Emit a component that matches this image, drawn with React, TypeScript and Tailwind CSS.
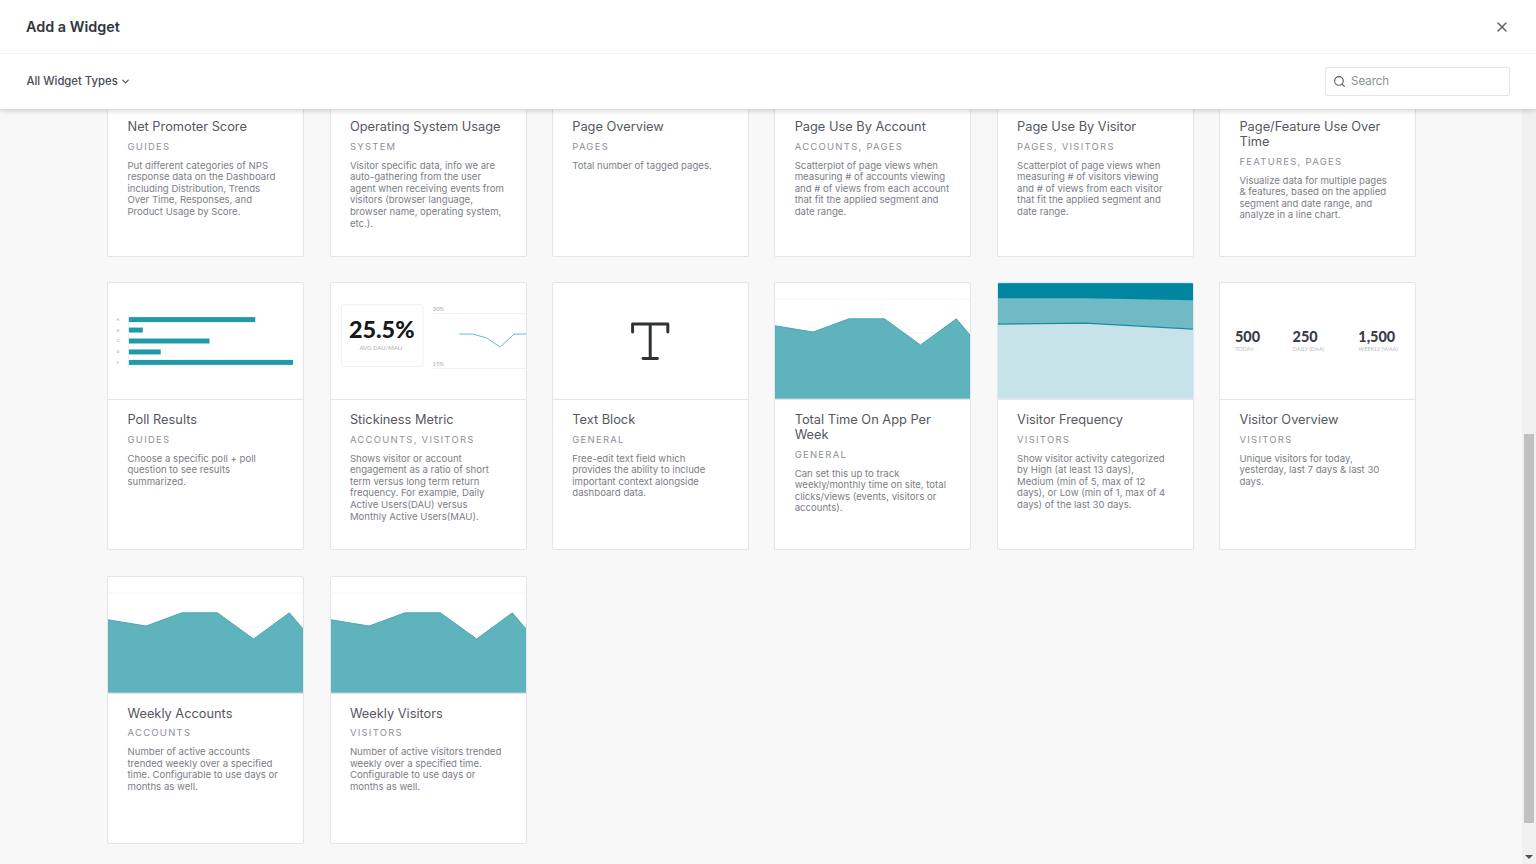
import type { ReactNode } from "react";
import { X, Search, ChevronDown } from "lucide-react";

type Widget = {
	title: string;
	tags: string;
	text: string;
	art?: ReactNode;
};

function AreaArt() {
	return (
		<svg viewBox="0 0 196 116" className="block h-[116px] w-full">
			<line x1="0" y1="16" x2="196" y2="16" stroke="#f4f4f7" />
			<line x1="0" y1="50" x2="196" y2="50" stroke="#f4f4f7" />
			<polygon
				points="0,42.7 38.3,49 74.3,35.7 110,35.7 146.3,62 182.3,35.7 196,52 196,116 0,116"
				fill="#5fb3bc"
			/>
			<polyline
				points="0,42.7 38.3,49 74.3,35.7 110,35.7 146.3,62 182.3,35.7 196,52"
				fill="none"
				stroke="#4ba6b0"
			/>
		</svg>
	);
}

function PollArt() {
	const bars = [
		["A", 34, 127],
		["B", 44.5, 14],
		["C", 55.5, 81],
		["D", 66.5, 32],
		["E", 77, 165],
	] as const;
	return (
		<svg viewBox="0 0 196 116" className="block h-[116px] w-full">
			<line x1="20.5" y1="31" x2="20.5" y2="85" stroke="#eef0f3" />
			{bars.map(([label, y, w]) => (
				<g key={label}>
					<text x="10" y={y + 4} fontSize="4" fill="#9a9ea6" textAnchor="middle">
						{label}
					</text>
					<rect x="21" y={y} width={w} height="5" fill="#1f9aa8" />
				</g>
			))}
		</svg>
	);
}

function StickinessArt() {
	return (
		<svg viewBox="0 0 196 116" className="block h-[116px] w-full">
			<rect x="10.5" y="21.5" width="82" height="62" rx="1" fill="#fff" stroke="#f0f0f3" />
			<text
				x="51"
				y="55"
				fontSize="23.5"
				fontWeight="900"
				fill="#17181c"
				textAnchor="middle"
				fontFamily="Lato, sans-serif"
			>
				25.5%
			</text>
			<text x="50" y="67" fontSize="6" fill="#a9adb4" textAnchor="middle" fontFamily="Lato, sans-serif">
				AVG DAU/MAU
			</text>
			<text x="102" y="28" fontSize="6" fill="#a9adb4" fontFamily="Lato, sans-serif">
				30%
			</text>
			<text x="102" y="83" fontSize="6" fill="#a9adb4" fontFamily="Lato, sans-serif">
				15%
			</text>
			<line x1="102" y1="30.5" x2="196" y2="30.5" stroke="#f0f0f3" />
			<line x1="102" y1="85.5" x2="196" y2="85.5" stroke="#f0f0f3" />
			<polyline
				points="129,51 142.5,51 156.5,55 170,64 184,51 196,51"
				fill="none"
				stroke="#62bcc8"
				strokeWidth="1"
			/>
		</svg>
	);
}

function TextArt() {
	return (
		<svg viewBox="0 0 196 116" className="block h-[116px] w-full">
			<path
				d="M80 49 V40.8 H115.4 V49 M97.7 40.8 V75.5 M90.5 75.5 H105"
				fill="none"
				stroke="#2f3138"
				strokeWidth="3"
				strokeLinecap="round"
				strokeLinejoin="round"
			/>
		</svg>
	);
}

function FrequencyArt() {
	return (
		<svg viewBox="0 0 196 116" className="block h-[116px] w-full">
			<rect width="196" height="116" fill="#c5e3e8" />
			<polygon points="0,41 88,40 196,46 196,0 0,0" fill="#6fbac5" />
			<polygon points="0,15 88,15 196,17 196,0 0,0" fill="#00879f" />
			<polyline points="0,41 88,40 196,46" fill="none" stroke="#1a8c9f" strokeWidth="1.2" />
		</svg>
	);
}

function OverviewArt() {
	const stats = [
		["500", 15, "TODAY"],
		["250", 73, "DAILY (DAA)"],
		["1,500", 139, "WEEKLY (WAA)"],
	] as const;
	return (
		<svg viewBox="0 0 196 116" className="block h-[116px] w-full">
			{stats.map(([num, x, label]) => (
				<g key={num} fontFamily="Lato, sans-serif">
					<text x={x} y="59" fontSize="14.5" fontWeight="900" fill="#3a3d46">
						{num}
					</text>
					<text x={x} y="68" fontSize="5.7" fill="#b9bcc3">
						{label}
					</text>
				</g>
			))}
		</svg>
	);
}

const firstRow: Widget[] = [
	{
		title: "Net Promoter Score",
		tags: "GUIDES",
		text: "Put different categories of NPS response data on the Dashboard including Distribution, Trends Over Time, Responses, and Product Usage by Score.",
	},
	{
		title: "Operating System Usage",
		tags: "SYSTEM",
		text: "Visitor specific data, info we are auto-gathering from the user agent when receiving events from visitors (browser language, browser name, operating system, etc.).",
	},
	{ title: "Page Overview", tags: "PAGES", text: "Total number of tagged pages." },
	{
		title: "Page Use By Account",
		tags: "ACCOUNTS, PAGES",
		text: "Scatterplot of page views when measuring # of accounts viewing and # of views from each account that fit the applied segment and date range.",
	},
	{
		title: "Page Use By Visitor",
		tags: "PAGES, VISITORS",
		text: "Scatterplot of page views when measuring # of visitors viewing and # of views from each visitor that fit the applied segment and date range.",
	},
	{
		title: "Page/Feature Use Over Time",
		tags: "FEATURES, PAGES",
		text: "Visualize data for multiple pages &\u00a0features, based on the applied segment and date range, and analyze in a line chart.",
	},
];

const widgets: Widget[] = [
	{
		title: "Poll Results",
		tags: "GUIDES",
		text: "Choose a specific poll + poll question to see results summarized.",
		art: <PollArt />,
	},
	{
		title: "Stickiness Metric",
		tags: "ACCOUNTS, VISITORS",
		text: "Shows visitor or account engagement as a ratio of short term versus long term return frequency. For example, Daily Active Users(DAU) versus Monthly Active Users(MAU).",
		art: <StickinessArt />,
	},
	{
		title: "Text Block",
		tags: "GENERAL",
		text: "Free-edit text field which provides\u00a0the ability to include important context alongside dashboard data.",
		art: <TextArt />,
	},
	{
		title: "Total Time On App Per Week",
		tags: "GENERAL",
		text: "Can set this up to track weekly/monthly time on site, total clicks/views (events, visitors or accounts).",
		art: <AreaArt />,
	},
	{
		title: "Visitor Frequency",
		tags: "VISITORS",
		text: "Show visitor activity categorized by High (at least 13 days), Medium\u00a0(min of 5, max of 12 days), or Low (min of 1, max of 4 days) of the last 30 days.",
		art: <FrequencyArt />,
	},
	{
		title: "Visitor Overview",
		tags: "VISITORS",
		text: "Unique visitors for today, yesterday, last 7 days & last 30 days.",
		art: <OverviewArt />,
	},
	{
		title: "Weekly Accounts",
		tags: "ACCOUNTS",
		text: "Number of active accounts trended weekly over a specified time. Configurable to use days or months as well.",
		art: <AreaArt />,
	},
	{
		title: "Weekly Visitors",
		tags: "VISITORS",
		text: "Number of active visitors trended weekly over a specified time. Configurable to use days or months as well.",
		art: <AreaArt />,
	},
];

function CardBody({ widget }: { widget: Widget }) {
	return (
		<div className="px-[19.2px]">
			<h3 className="text-[12.8px] leading-[15px] text-[#55575f]">{widget.title}</h3>
			<div className="mt-[6.8px] text-[9.5px] leading-[12px] tracking-[1.25px] text-[#8d9098]">
				{widget.tags}
			</div>
			<p className="mt-[6.8px] text-[9.6px] leading-[11.6px] text-[#7b7e86]">{widget.text}</p>
		</div>
	);
}

function Card({ widget }: { widget: Widget }) {
	return (
		<div className="h-[268px] overflow-hidden rounded-[2px] border border-[#e4e4ee] bg-white">
			<div className="h-[117px] border-b border-[#e4e4ee]">{widget.art}</div>
			<div className="pt-[12px]">
				<CardBody widget={widget} />
			</div>
		</div>
	);
}

export default function App() {
	return (
		<div className="flex h-screen flex-col overflow-hidden bg-[#f8f8f9] font-['Inter',sans-serif]">
			<header className="relative z-10 bg-white shadow-[0_1px_6px_rgba(0,0,0,0.22)]">
				<div className="flex h-[54px] items-center justify-between border-b border-[#f3f3f6] pl-[26px] pr-[26px]">
					<h1 className="pt-[1px] text-[14.4px] font-semibold text-[#33353d]">Add a Widget</h1>
					<X size={16} strokeWidth={2} className="text-[#5d5f68]" />
				</div>
				<div className="flex h-[55px] items-center justify-between pl-[26.5px] pr-[26px]">
					<button className="flex items-center gap-[2px] text-[11.3px] font-medium text-[#4a4c55]">
						All Widget Types
						<ChevronDown size={11} strokeWidth={2.5} />
					</button>
					<div className="flex h-[29px] w-[185px] items-center gap-[5px] rounded-[2px] border border-[#e4e4ee] pl-[7px]">
						<Search size={13} strokeWidth={2} className="text-[#55575f]" />
						<span className="text-[11.5px] text-[#8d9098]">Search</span>
					</div>
				</div>
			</header>
			<div className="flex min-h-0 flex-1">
				<main className="min-w-0 flex-1 overflow-hidden pl-[107.3px]">
					<div className="grid grid-cols-[repeat(6,197px)] gap-x-[25.4px] gap-y-[25.5px]">
						{firstRow.map((w) => (
							<div
								key={w.title}
								className="h-[147.6px] rounded-b-[2px] border-x border-b border-[#e4e4ee] bg-white pt-[10px]"
							>
								<CardBody widget={w} />
							</div>
						))}
						{widgets.map((w) => (
							<Card key={w.title} widget={w} />
						))}
					</div>
				</main>
				<div className="relative w-[14px] bg-[#f1f1f1]">
					<div className="absolute left-[2px] top-[325px] h-[389px] w-[10px] bg-[#c1c1c1]" />
					<div className="absolute bottom-[5px] left-[3px] h-0 w-0 border-x-[4px] border-t-[4px] border-x-transparent border-t-[#505050]" />
				</div>
			</div>
		</div>
	);
}
